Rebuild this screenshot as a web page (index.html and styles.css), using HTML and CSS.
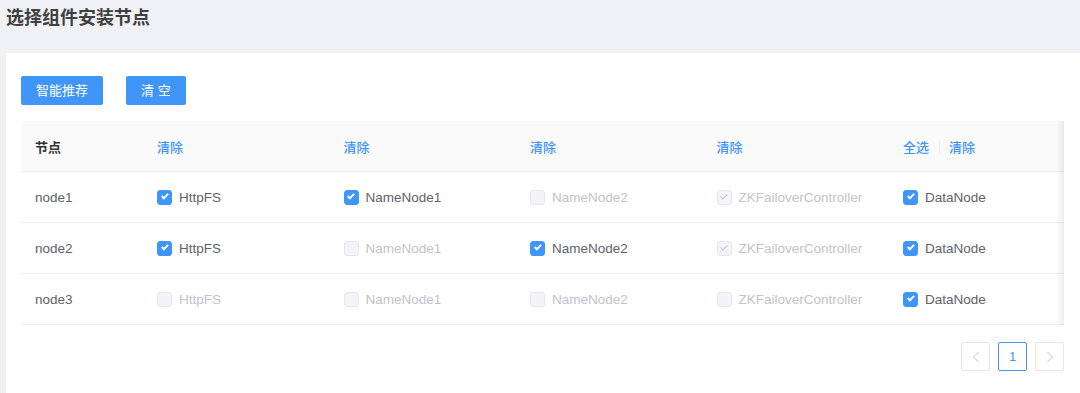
FILE: index.html
```html
<!DOCTYPE html>
<html lang="zh-CN">
<head>
  <meta charset="UTF-8">
  <title>选择组件安装节点</title>
  <link rel="stylesheet" href="styles.css">
</head>
<body class="page">
  <h1 class="heading">选择组件安装节点</h1>
  <div class="card">
    <div class="toolbar">
      <button class="btn" type="button">智能推荐</button>
      <button class="btn" type="button">清 空</button>
    </div>

    <div class="table">
      <div class="table__row table__row--head">
        <div class="table__cell table__cell--title">节点</div>
        <div class="table__cell"><a class="link">清除</a></div>
        <div class="table__cell"><a class="link">清除</a></div>
        <div class="table__cell"><a class="link">清除</a></div>
        <div class="table__cell"><a class="link">清除</a></div>
        <div class="table__cell"><a class="link">全选</a><span class="divider"></span><a class="link">清除</a></div>
        <div class="table__cell"></div>
      </div>

      <div class="table__row">
        <div class="table__cell">node1</div>
        <div class="table__cell"><label class="check check--on"><span class="check__box"></span>HttpFS</label></div>
        <div class="table__cell"><label class="check check--on"><span class="check__box"></span>NameNode1</label></div>
        <div class="table__cell"><label class="check check--off"><span class="check__box"></span>NameNode2</label></div>
        <div class="table__cell"><label class="check check--locked"><span class="check__box"></span>ZKFailoverController</label></div>
        <div class="table__cell"><label class="check check--on"><span class="check__box"></span>DataNode</label></div>
        <div class="table__cell"></div>
      </div>

      <div class="table__row">
        <div class="table__cell">node2</div>
        <div class="table__cell"><label class="check check--on"><span class="check__box"></span>HttpFS</label></div>
        <div class="table__cell"><label class="check check--off"><span class="check__box"></span>NameNode1</label></div>
        <div class="table__cell"><label class="check check--on"><span class="check__box"></span>NameNode2</label></div>
        <div class="table__cell"><label class="check check--locked"><span class="check__box"></span>ZKFailoverController</label></div>
        <div class="table__cell"><label class="check check--on"><span class="check__box"></span>DataNode</label></div>
        <div class="table__cell"></div>
      </div>

      <div class="table__row">
        <div class="table__cell">node3</div>
        <div class="table__cell"><label class="check check--off"><span class="check__box"></span>HttpFS</label></div>
        <div class="table__cell"><label class="check check--off"><span class="check__box"></span>NameNode1</label></div>
        <div class="table__cell"><label class="check check--off"><span class="check__box"></span>NameNode2</label></div>
        <div class="table__cell"><label class="check check--off"><span class="check__box"></span>ZKFailoverController</label></div>
        <div class="table__cell"><label class="check check--on"><span class="check__box"></span>DataNode</label></div>
        <div class="table__cell"></div>
      </div>
    </div>

    <div class="pager">
      <button class="pager__btn" type="button">
        <svg width="8" height="12" viewBox="0 0 8 12"><path d="M6.5 1 L1.5 6 L6.5 11" fill="none" stroke="#c0c4cc" stroke-width="1"/></svg>
      </button>
      <button class="pager__btn pager__btn--active" type="button">1</button>
      <button class="pager__btn" type="button">
        <svg width="8" height="12" viewBox="0 0 8 12"><path d="M1.5 1 L6.5 6 L1.5 11" fill="none" stroke="#c0c4cc" stroke-width="1"/></svg>
      </button>
    </div>
  </div>
</body>
</html>
```

FILE: styles.css
```css
*, *::before, *::after {
  box-sizing: border-box;
}

.page {
  margin: 0;
  background: #f0f1f5;
  font-family: "Liberation Sans", "Noto Sans CJK SC", sans-serif;
  font-size: 13.5px;
  color: #606266;
}

.heading {
  margin: 0;
  padding: 7px 6px 0;
  height: 53px;
  font-size: 18px;
  font-weight: bold;
  color: #404040;
  line-height: 22px;
}

.card {
  margin-left: 6px;
  height: 340px;
  background: #fff;
  padding: 23px 16px 0 15px;
}

.toolbar {
  display: flex;
  gap: 23px;
}

.btn {
  height: 29px;
  padding: 0 15px;
  border: 0;
  border-radius: 2px;
  background: #4095f8;
  color: #fff;
  font-family: inherit;
  font-size: 13px;
  line-height: 29px;
}

.table {
  position: relative;
  margin-top: 16px;
  width: 1043px;
  overflow: hidden;
}

.table::after {
  content: "";
  position: absolute;
  top: 0;
  right: 0;
  bottom: 0;
  width: 8px;
  background: linear-gradient(to right, rgba(0, 0, 0, 0), rgba(0, 0, 0, 0.07));
}

.table__row {
  display: grid;
  grid-template-columns: 122px repeat(5, 186.5px) 20px;
  height: 51px;
  border-bottom: 1px solid #ebeef5;
}

.table__row--head {
  height: 51px;
  background: #fafafa;
  font-size: 13px;
}

.table__cell {
  display: flex;
  align-items: center;
  padding-left: 14px;
  white-space: nowrap;
}

.table__cell--title {
  font-weight: bold;
  color: #333;
}

.link {
  color: #4095f8;
  font-weight: 500;
  cursor: pointer;
}

.divider {
  display: inline-block;
  width: 1px;
  height: 14px;
  margin: 0 9px 0 10px;
  background: #ebeef5;
}

.check {
  display: flex;
  align-items: center;
  gap: 7px;
  color: #606266;
}

.check__box {
  position: relative;
  width: 15px;
  height: 15px;
  border: 1px solid #dcdfe6;
  border-radius: 3px;
  background: #fff;
}

.check--on .check__box {
  background: #4095f8;
  border-color: #4095f8;
}

.check--on .check__box::after,
.check--locked .check__box::after {
  content: "";
  position: absolute;
  left: 4.5px;
  top: 1.5px;
  width: 3.5px;
  height: 7px;
  border: 2px solid #fff;
  border-top: 0;
  border-left: 0;
  transform: rotate(45deg);
}

.check--off,
.check--locked {
  color: #c0c4cc;
}

.check--off .check__box,
.check--locked .check__box {
  background: #f2f4f7;
  border-color: #e4e7ed;
}

.check--locked .check__box::after {
  border-color: #c0c4cc;
  border-width: 1.5px;
}

.pager {
  display: flex;
  justify-content: flex-end;
  gap: 8px;
  width: 1043px;
  margin-top: 17px;
}

.pager__btn {
  display: flex;
  align-items: center;
  justify-content: center;
  width: 29px;
  height: 29px;
  padding: 0;
  border: 1px solid #e4e7ed;
  border-radius: 2px;
  background: #fff;
  color: #4095f8;
  font-family: inherit;
  font-size: 13px;
}

.pager__btn--active {
  border-color: #4095f8;
}
```
